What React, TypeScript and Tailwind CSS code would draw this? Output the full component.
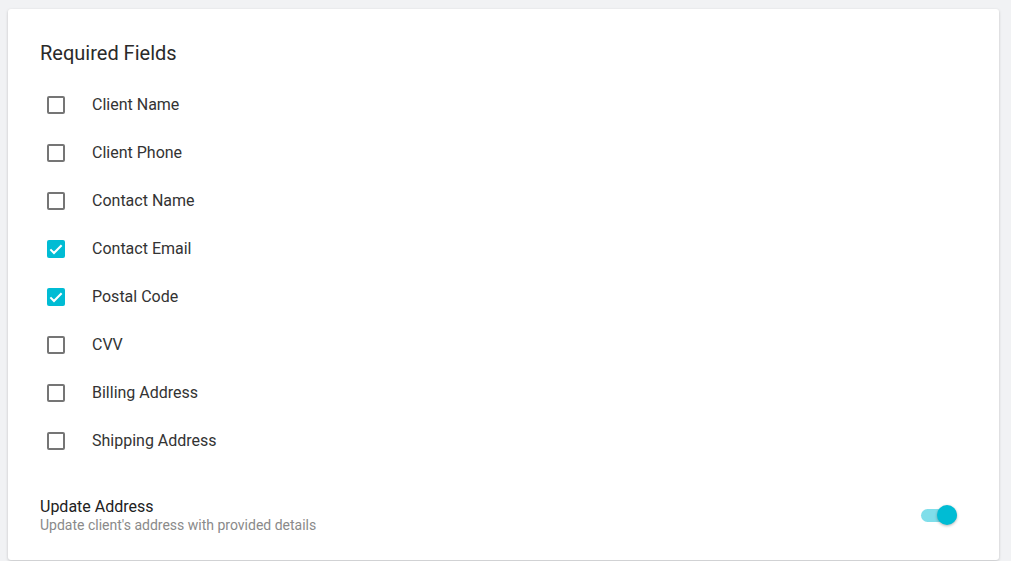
import { useState } from 'react';

const FIELDS = [
  { label: 'Client Name', checked: false },
  { label: 'Client Phone', checked: false },
  { label: 'Contact Name', checked: false },
  { label: 'Contact Email', checked: true },
  { label: 'Postal Code', checked: true },
  { label: 'CVV', checked: false },
  { label: 'Billing Address', checked: false },
  { label: 'Shipping Address', checked: false },
];

function Checkbox({ checked, onChange }: { checked: boolean; onChange: () => void }) {
  return (
    <button
      type="button"
      onClick={onChange}
      className={`flex h-[18px] w-[18px] items-center justify-center rounded-[2px] ${
        checked ? 'bg-[#00bcd4]' : 'border-2 border-[#757575] bg-white'
      }`}
    >
      {checked && (
        <svg viewBox="0 0 24 24" className="h-[18px] w-[18px]" fill="none" stroke="white" strokeWidth={2.8}>
          <path d="M4.5 12.5l4.8 4.8L19.5 7" />
        </svg>
      )}
    </button>
  );
}

export default function App() {
  const [fields, setFields] = useState(FIELDS);
  const [updateAddress, setUpdateAddress] = useState(true);

  return (
    <div className="min-h-screen bg-[#f1f2f4] pl-2 pr-3 pt-[9px] font-['Roboto',sans-serif]">
      <div className="rounded-[3px] bg-white pb-[27px] pl-8 pr-[42px] pt-[30px] shadow-[0_1px_3px_rgba(0,0,0,0.2)]">
        <h2 className="text-[20px] leading-[28px] text-[#2a2a2a]">Required Fields</h2>

        <ul className="mt-[14px]">
          {fields.map((f, i) => (
            <li key={f.label} className="flex h-12 items-center">
              <div className="ml-[7px] mr-[27px]">
                <Checkbox
                  checked={f.checked}
                  onChange={() =>
                    setFields((prev) => prev.map((p, j) => (j === i ? { ...p, checked: !p.checked } : p)))
                  }
                />
              </div>
              <span className="text-[16px] text-[#333333]">{f.label}</span>
            </li>
          ))}
        </ul>

        <div className="mt-[32px] flex items-center justify-between">
          <div>
            <p className="text-[16px] leading-[20px] text-[#212121]">Update Address</p>
            <p className="text-[14px] leading-[16px] text-[#8a8a8a]">Update client's address with provided details</p>
          </div>
          <button
            type="button"
            onClick={() => setUpdateAddress((v) => !v)}
            className="relative h-5 w-9"
          >
            <span
              className={`absolute left-0 right-0 top-[4px] h-[13px] rounded-full ${
                updateAddress ? 'bg-[#80deea]' : 'bg-[#bdbdbd]'
              }`}
            />
            <span
              className={`absolute top-0 h-5 w-5 rounded-full shadow-[0_1px_3px_rgba(0,0,0,0.3)] ${
                updateAddress ? 'right-0 bg-[#00bcd4]' : 'left-0 bg-[#fafafa]'
              }`}
            />
          </button>
        </div>
      </div>
    </div>
  );
}
